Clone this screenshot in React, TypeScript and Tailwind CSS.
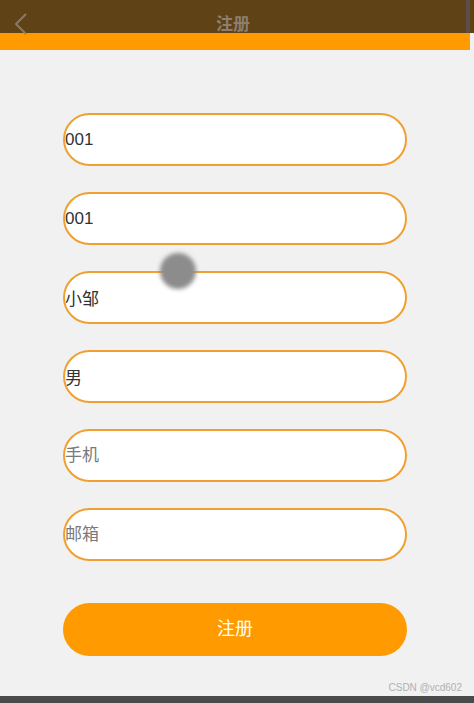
import React from "react";

const fields = [
  { value: "001", placeholder: "" },
  { value: "001", placeholder: "" },
  { value: "小邹", placeholder: "" },
  { value: "男", placeholder: "" },
  { value: "", placeholder: "手机" },
  { value: "", placeholder: "邮箱" },
];

export default function App() {
  return (
    <div
      className="relative flex h-[703px] w-[474px] flex-col overflow-hidden bg-[#f1f1f1]"
      style={{ fontFamily: '"Liberation Sans", "Noto Sans CJK SC", sans-serif' }}
    >
      {/* header */}
      <div className="flex h-[33px] items-center bg-[#5f4216] pr-[4px]">
        <div className="relative flex h-full w-full items-center justify-center">
          <svg
            className="absolute left-[13px] top-[13px]"
            width="16"
            height="22"
            viewBox="0 0 16 22"
            fill="none"
          >
            <path d="M13 1 L3 11 L13 21" stroke="#8a7a66" strokeWidth="2" />
          </svg>
          <span className="mt-[17px] text-[17px] font-bold text-[#8d7f70]">注册</span>
        </div>
        <div className="h-full w-[4px] bg-[#5a4e4c]" />
      </div>
      <div className="h-[17px] w-[470px] bg-[#ff9a00]" />

      {/* form */}
      <div className="flex flex-col gap-[26px] px-[63px] pt-[63px]">
        {fields.map((f, i) => (
          <input
            key={i}
            readOnly
            value={f.value}
            placeholder={f.placeholder}
            className="h-[53px] w-[344px] rounded-full border-2 border-[#f0a030] bg-white px-0 text-[17px] text-[#333] outline-none placeholder:text-[#7a7a7a]"
          />
        ))}
        <button className="mt-[16px] h-[53px] w-[344px] rounded-full bg-[#ff9a00] text-[18px] text-white">
          注册
        </button>
      </div>

      <div className="flex-1" />
      <div className="flex justify-end pr-[12px] pb-[1px] text-[10px] text-[#b0b0b0]">
        CSDN @vcd602
      </div>
      <div className="h-[7px] bg-[#4a4a4a]" />

      {/* touch indicator */}
      <div className="absolute left-[160px] top-[253px] h-[36px] w-[36px] rounded-full bg-[#8c8c8c] blur-[2px]" />
    </div>
  );
}
